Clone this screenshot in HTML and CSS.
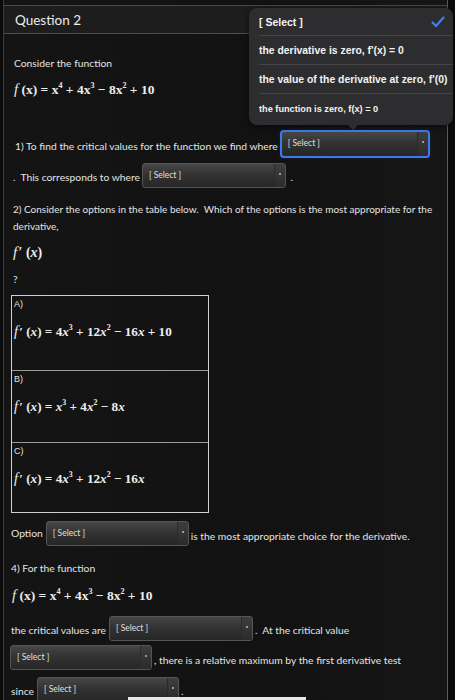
FILE: index.html
```html
<!DOCTYPE html>
<html>
<head>
<meta charset="utf-8">
<link rel="stylesheet" href="styles.css">
</head>
<body>
<div class="frame">
  <div class="header">Question 2</div>
  <div class="content">
    <p class="txt consider">Consider the function</p>
    <div class="math m-top"><i class="f">f</i> (x) = x<sup>4</sup> + 4x<sup>3</sup> − 8x<sup>2</sup> + 10</div>

    <div class="row r1"><span class="txt">1) To find the critical values for the function we find where</span><span class="sel active w150"><span class="lbl">[ Select ]</span><span class="arr"></span></span></div>
    <div class="row r2"><span class="txt">.&nbsp; This corresponds to where</span><span class="sel w144"><span class="lbl">[ Select ]</span><span class="arr"></span></span><span class="txt">&nbsp;.</span></div>

    <p class="txt para2">2) Consider the options in the table below.&nbsp; Which of the options is the most appropriate for the derivative,</p>
    <div class="math fprime"><i class="f">f</i>&#8202;′ (<i>x</i>)</div>
    <p class="txt q">?</p>

    <div class="table">
      <div class="cell ca">
        <div class="lab">A)</div>
        <div class="math tm"><i class="f">f</i>&#8202;′ (<i>x</i>) = 4<i>x</i><sup>3</sup> + 12<i>x</i><sup>2</sup> − 16<i>x</i> + 10</div>
      </div>
      <div class="cell cb">
        <div class="lab">B)</div>
        <div class="math tm"><i class="f">f</i>&#8202;′ (<i>x</i>) = <i>x</i><sup>3</sup> + 4<i>x</i><sup>2</sup> − 8<i>x</i></div>
      </div>
      <div class="cell cc">
        <div class="lab">C)</div>
        <div class="math tm"><i class="f">f</i>&#8202;′ (<i>x</i>) = 4<i>x</i><sup>3</sup> + 12<i>x</i><sup>2</sup> − 16<i>x</i></div>
      </div>
    </div>

    <div class="lower">
      <div class="row r-opt"><span class="txt">Option</span><span class="sel w143"><span class="lbl">[ Select ]</span><span class="arr"></span></span><span class="txt low">is the most appropriate choice for the derivative.</span></div>
      <p class="txt four">4) For the function</p>
      <div class="math m-low"><i class="f">f</i> (x) = x<sup>4</sup> + 4x<sup>3</sup> − 8x<sup>2</sup> + 10</div>
      <div class="row r-crit"><span class="txt">the critical values are</span><span class="sel w144"><span class="lbl">[ Select ]</span><span class="arr"></span></span><span class="txt">.&nbsp; At the critical value</span></div>
      <div class="row r-max"><span class="sel w142"><span class="lbl">[ Select ]</span><span class="arr"></span></span><span class="txt low">, there is a relative maximum by the first derivative test</span></div>
      <div class="row r-since"><span class="txt">since</span><span class="sel w142"><span class="lbl">[ Select ]</span><span class="arr"></span></span><span class="txt">.</span></div>
    </div>
  </div>
</div>

<div class="menu">
  <div class="item first"><span>[ Select ]</span>
    <svg class="check" width="14" height="12" viewBox="0 0 14 12"><path d="M1.5 6.5 L5 10 L12.5 1.5" fill="none" stroke="#3f7ff2" stroke-width="2.2" stroke-linecap="round" stroke-linejoin="round"/></svg>
  </div>
  <div class="item">the derivative is zero, f'(x) = 0</div>
  <div class="item">the value of the derivative at zero, f'(0)</div>
  <div class="item small">the function is zero, f(x) = 0</div>
  <div class="pointer"></div>
</div>
<div class="strip"></div>
</body>
</html>
```

FILE: styles.css
```css
html, body {
  margin: 0;
  padding: 0;
}
body {
  background: #0b0b0b;
  width: 455px;
  height: 700px;
  overflow: hidden;
  position: relative;
  font-family: Lato, "Open Sans", sans-serif;
  color: #e4e4e4;
}
.frame {
  margin: 0 7px 0 3px;
  height: 700px;
  border-left: 1px solid #3c3c3c;
  border-right: 1px solid #5a5a5a;
  background: linear-gradient(90deg, #141414 0%, #121212 60%, #161616 100%);
  padding-top: 5px;
  box-sizing: border-box;
}
.header {
  height: 29px;
  box-sizing: border-box;
  border-top: 1px solid #4a4a4a;
  border-bottom: 1px solid #4e4e4e;
  background: #1d1d1d;
  padding-left: 11px;
  font-size: 13.5px;
  line-height: 29px;
  color: #ececec;
}
.content {
  padding: 0 0 0 10px;
}
.txt {
  font-size: 10.3px;
  line-height: 17px;
  margin: 0;
}
.consider {
  margin-top: 21px;
}
.math {
  font-family: "Liberation Serif", "Times New Roman", serif;
  font-weight: bold;
  font-size: 13.5px;
  line-height: 18px;
  color: #ededed;
  white-space: nowrap;
}
.math sup {
  font-size: 0.6em;
  line-height: 0;
  vertical-align: 0.75em;
}
.math .f {
  font-style: italic;
  font-weight: normal;
  font-size: 1.1em;
}
.m-top {
  margin-top: 8px;
}
.row {
  display: flex;
  align-items: center;
  white-space: nowrap;
}
.r1 {
  margin-top: 31px;
  margin-left: 1px;
}
.r1 .txt {
  position: relative;
  top: 2px;
}
.r2 {
  margin-top: 5px;
  margin-left: -1px;
}
.r2 .txt {
  position: relative;
  top: 2px;
}
.para2 {
  font-size: 10px;
  margin-top: 13px;
  margin-left: -1px;
  padding-right: 6px;
}
.fprime {
  margin-top: 8px;
  margin-left: -1px;
  font-size: 14px;
}
.q {
  margin-top: 9px;
  margin-left: -1px;
}
.sel {
  display: inline-flex;
  height: 25px;
  box-sizing: border-box;
  border: 1px solid #555;
  border-radius: 3px;
  background: linear-gradient(180deg, #474747 0%, #333 45%, #262626 100%);
  margin-left: 2px;
  margin-right: 2px;
  align-items: stretch;
}
.sel.active {
  height: 28px;
  border: 2px solid #3b7ae8;
  border-radius: 4px;
  box-shadow: 0 0 1px #2d5fbf;
}
.lbl {
  flex: 1;
  display: flex;
  align-items: center;
  font-size: 8.5px;
  padding: 0 0 2px 6px;
  color: #e0e0e0;
}
.active .lbl {
  padding-left: 6px;
}
.arr {
  width: 10px;
  position: relative;
  background: linear-gradient(180deg, #3e3e3e, #2b2b2b);
  border-left: 1px solid #2a2a2a;
  border-radius: 0 2px 2px 0;
}
.arr::after {
  content: "";
  position: absolute;
  left: 4px;
  top: 9px;
  width: 2px;
  height: 2px;
  background: #bbb;
  border-radius: 1px;
}
.w150 { width: 150px; }
.w144 { width: 144px; }
.w143 { width: 143px; }
.w142 { width: 142px; }

.table {
  margin: 7px 0 0 -3px;
  width: 198px;
  border: 1px solid #d0d0d0;
  box-sizing: border-box;
}
.cell {
  box-sizing: border-box;
  padding: 2px 0 0 2px;
}
.cell + .cell {
  border-top: 1px solid #9a9a9a;
}
.ca { height: 74px; }
.cb { height: 72px; }
.cc { height: 70px; }
.lab {
  font-family: "Liberation Sans", Arial, sans-serif;
  font-size: 9px;
  line-height: 12px;
  color: #e0e0e0;
}
.tm {
  margin-top: 12px;
  font-size: 13.2px;
}

.lower {
  margin-left: -3px;
}
.r-opt {
  margin-top: 8px;
}
.r-opt .sel { margin-left: 3px; }
.txt.low {
  position: relative;
  top: 3px;
}
.four {
  margin-top: 14px;
}
.m-low {
  margin-top: 9px;
  margin-left: 1px;
}
.r-crit {
  margin-top: 11px;
}
.r-crit .txt {
  position: relative;
  top: 2px;
}
.r-crit .sel { margin-left: 3px; }
.r-max {
  margin-top: 4px;
}
.r-max .sel { margin-left: -1px; }
.r-since {
  margin-top: 7px;
}
.r-since .txt {
  position: relative;
  top: 2px;
}
.r-since .sel { margin-left: 3px; }

.menu {
  position: absolute;
  left: 249px;
  top: 8px;
  width: 204px;
  height: 117px;
  box-sizing: border-box;
  background: #2d2d2f;
  border-radius: 8px;
  box-shadow: 0 1px 6px rgba(0,0,0,0.6);
  padding: 0 0 0 10px;
  font-family: "Liberation Sans", Arial, sans-serif;
  font-weight: bold;
  color: #f2f2f2;
}
.item {
  height: 29px;
  display: flex;
  align-items: center;
  justify-content: space-between;
  font-size: 10.4px;
  border-bottom: 1px solid #444446;
  box-sizing: border-box;
  padding-right: 8px;
  white-space: nowrap;
}
.item.first {
  height: 28px;
  font-size: 10.5px;
}
.item.small {
  font-size: 9.2px;
  border-bottom: none;
}
.check {
  display: block;
}
.pointer {
  position: absolute;
  left: 98px;
  bottom: -5px;
  width: 0;
  height: 0;
  border-left: 6px solid transparent;
  border-right: 6px solid transparent;
  border-top: 6px solid #2d2d2f;
}
.strip {
  position: absolute;
  left: 128px;
  top: 697px;
  width: 178px;
  height: 3px;
  background: #e8e8e8;
}
```
